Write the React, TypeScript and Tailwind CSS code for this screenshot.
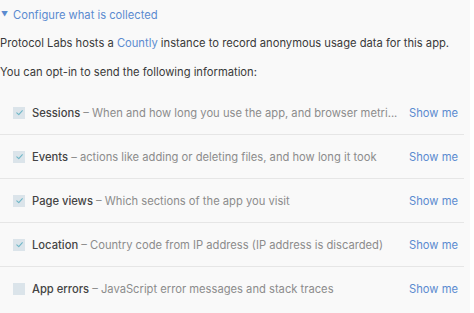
import React from 'react';

interface Metric {
  id: string;
  label: string;
  desc: string;
  checked: boolean;
}

const metrics: Metric[] = [
  { id: 'sessions', label: 'Sessions', desc: 'When and how long you use the app, and browser metri...', checked: true },
  { id: 'events', label: 'Events', desc: 'actions like adding or deleting files, and how long it took', checked: true },
  { id: 'views', label: 'Page views', desc: 'Which sections of the app you visit', checked: true },
  { id: 'location', label: 'Location', desc: 'Country code from IP address (IP address is discarded)', checked: true },
  { id: 'errors', label: 'App errors', desc: 'JavaScript error messages and stack traces', checked: false },
];

const Checkbox = ({ checked }: { checked: boolean }) => (
  <span className="flex h-3 w-3 shrink-0 items-center justify-center bg-[#dbe4ea]">
    {checked && (
      <svg width="9" height="9" viewBox="0 0 10 10" fill="none">
        <path d="M2 5.4 L4.2 7.4 L8.2 3" stroke="#6eb6c7" strokeWidth="1.2" strokeLinecap="round" strokeLinejoin="round" />
      </svg>
    )}
  </span>
);

export default function App() {
  return (
    <div className="h-[313px] w-[474px] overflow-hidden bg-white" style={{ fontFamily: 'Inter, "Noto Sans", sans-serif' }}>
      <div className="h-full w-[470px] bg-[#f9f9f9] text-[11.2px] leading-[16px] text-[#3a3a3a]">
        <div className="flex items-center gap-[5px] pl-[1px] pt-[7px] text-[#5b8bd0]">
          <span className="text-[7px]">▼</span>
          <span>Configure what is collected</span>
        </div>
        <p className="mt-[12px] whitespace-nowrap">
          Protocol Labs hosts a <span className="text-[#5b8bd0]">Countly</span> instance to record anonymous usage data for this app.
        </p>
        <p className="mt-[13px]">You can opt-in to send the following information:</p>
        <ul className="mt-[11px] w-[464px]">
          {metrics.map((m, i) => (
            <li
              key={m.id}
              className={`flex h-[44px] items-center pl-[13px] pr-[6px] ${i < metrics.length - 1 ? 'border-b border-[#e6e6e6]' : ''}`}
            >
              <Checkbox checked={m.checked} />
              <span className="ml-[7px] flex-1 overflow-hidden whitespace-nowrap">
                <span className="font-medium text-[#444]">{m.label}</span>
                <span className="text-[#8c8c8c]"> – {m.desc}</span>
              </span>
              <span className="ml-3 text-[#5b8bd0]">Show me</span>
            </li>
          ))}
        </ul>
      </div>
    </div>
  );
}
